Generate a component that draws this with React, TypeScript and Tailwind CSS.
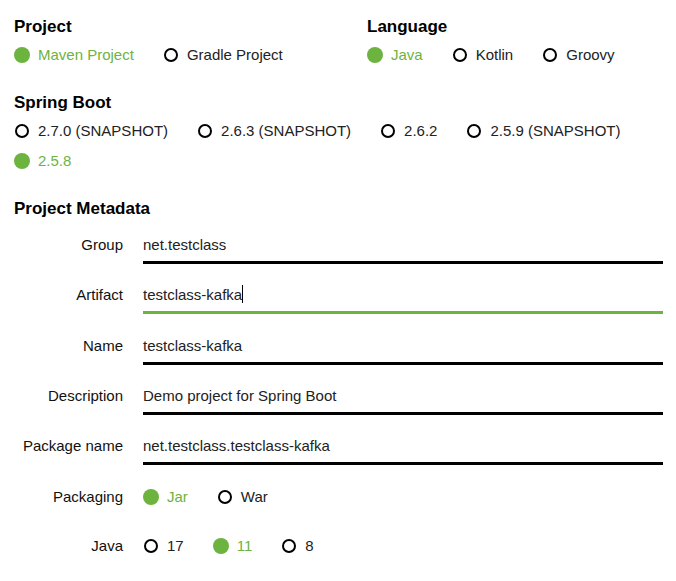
import React from 'react';

type Opt = { label: string; checked?: boolean };

const Radio: React.FC<Opt> = ({ label, checked }) => (
    <div className="flex items-center h-5">
        <span className="w-4 h-4 flex items-center justify-center mr-2 shrink-0">
            {checked ? (
                <span className="w-4 h-4 rounded-full bg-[#6db33f]" />
            ) : (
                <span className="w-[14px] h-[14px] rounded-full border-2 border-black" />
            )}
        </span>
        <span className={checked ? 'text-[#6db33f]' : 'text-[#222]'}>{label}</span>
    </div>
);

const RadioGroup: React.FC<{ options: Opt[] }> = ({ options }) => (
    <div className="flex flex-wrap gap-x-[29px] gap-y-[10px]">
        {options.map((o) => (
            <Radio key={o.label} {...o} />
        ))}
    </div>
);

const Heading: React.FC<{ children: React.ReactNode }> = ({ children }) => (
    <h2 className="text-[17px] font-bold leading-5 text-black">{children}</h2>
);

const Field: React.FC<{ label: string; value: string; active?: boolean }> = ({ label, value, active }) => (
    <div className="flex">
        <div className="w-[109px] text-right leading-5 shrink-0 text-[#111]">{label}</div>
        <div
            className={
                'flex-1 ml-5 leading-5 pb-[6px] border-b-[3px] ' +
                (active ? 'border-[#6db33f]' : 'border-black')
            }
        >
            {value}
            {active && <span className="inline-block w-px h-[18px] bg-black align-[-3px]" />}
        </div>
    </div>
);

const App: React.FC = () => {
    return (
        <div
            className="bg-white w-[676px] h-[581px] pl-[14px] pr-[13px] pt-[17px] text-[15px] text-[#222]"
            style={{ fontFamily: '"Liberation Sans", Arial, sans-serif' }}
        >
            <div className="flex">
                <div className="w-[353px]">
                    <Heading>Project</Heading>
                    <div className="mt-2">
                        <RadioGroup options={[{ label: 'Maven Project', checked: true }, { label: 'Gradle Project' }]} />
                    </div>
                </div>
                <div>
                    <Heading>Language</Heading>
                    <div className="mt-2">
                        <RadioGroup options={[{ label: 'Java', checked: true }, { label: 'Kotlin' }, { label: 'Groovy' }]} />
                    </div>
                </div>
            </div>

            <div className="mt-7">
                <Heading>Spring Boot</Heading>
                <div className="mt-2">
                    <RadioGroup
                        options={[
                            { label: '2.7.0 (SNAPSHOT)' },
                            { label: '2.6.3 (SNAPSHOT)' },
                            { label: '2.6.2' },
                            { label: '2.5.9 (SNAPSHOT)' },
                            { label: '2.5.8', checked: true },
                        ]}
                    />
                </div>
            </div>

            <div className="mt-7">
                <Heading>Project Metadata</Heading>
                <div className="mt-4 flex flex-col gap-[21.3px]">
                    <Field label="Group" value="net.testclass" />
                    <Field label="Artifact" value="testclass-kafka" active />
                    <Field label="Name" value="testclass-kafka" />
                    <Field label="Description" value="Demo project for Spring Boot" />
                    <Field label="Package name" value="net.testclass.testclass-kafka" />
                </div>
                <div className="flex mt-[22px]">
                    <div className="w-[109px] text-right leading-5 shrink-0 text-[#111]">Packaging</div>
                    <div className="ml-5">
                        <RadioGroup options={[{ label: 'Jar', checked: true }, { label: 'War' }]} />
                    </div>
                </div>
                <div className="flex mt-[29px]">
                    <div className="w-[109px] text-right leading-5 shrink-0 text-[#111]">Java</div>
                    <div className="ml-5">
                        <RadioGroup options={[{ label: '17' }, { label: '11', checked: true }, { label: '8' }]} />
                    </div>
                </div>
            </div>
        </div>
    );
};

export default App;
